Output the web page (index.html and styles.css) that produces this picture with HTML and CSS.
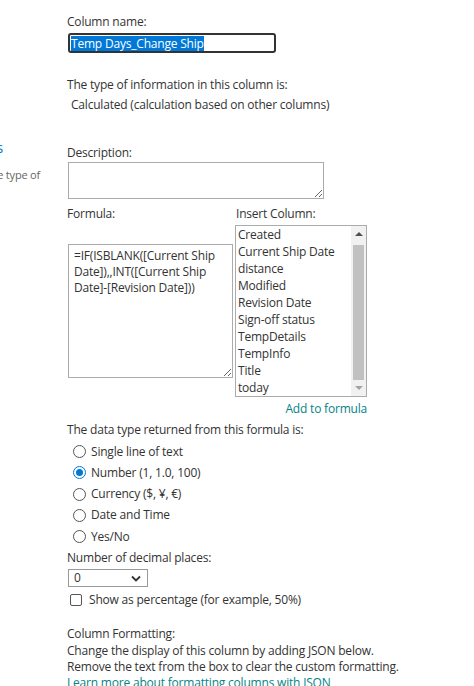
FILE: index.html
```html
<!DOCTYPE html>
<html lang="en">
<head>
  <meta charset="UTF-8">
  <meta name="viewport" content="width=device-width, initial-scale=1.0">
  <title>Edit Column</title>
  <link rel="stylesheet" href="styles.css">
</head>
<body>
  <div class="page">

    <!-- left nav, cut off by the window -->
    <aside class="side">
      <div class="side-title"><span>Name and Type Columns</span></div>
      <div class="side-text"><span>Type a name for this column, and select the type of</span></div>
    </aside>

    <main class="form">
      <div class="label">Column name:</div>
      <div class="name-box"><span class="sel">Temp Days_Change Ship</span></div>

      <div class="info">The type of information in this column is:</div>
      <div class="calc">Calculated (calculation based on other columns)</div>

      <div class="label desc-label">Description:</div>
      <textarea class="desc"></textarea>

      <!-- formula + column picker -->
      <div class="formula-row">
        <div class="formula-col">
          <div class="label">Formula:</div>
          <textarea class="formula">=IF(ISBLANK([Current Ship Date]),,INT([Current Ship Date]-[Revision Date]))</textarea>
        </div>
        <div class="insert-col">
          <div class="label insert-label">Insert Column:</div>
          <div class="listbox">
            <div class="items">
              <div>Created</div>
              <div>Current Ship Date</div>
              <div>distance</div>
              <div>Modified</div>
              <div>Revision Date</div>
              <div>Sign-off status</div>
              <div>TempDetails</div>
              <div>TempInfo</div>
              <div>Title</div>
              <div>today</div>
            </div>
            <div class="scrollbar">
              <div class="arrow up"></div>
              <div class="track"><div class="thumb"></div></div>
              <div class="arrow down"></div>
            </div>
          </div>
          <a class="link add" href="#">Add to formula</a>
        </div>
      </div>

      <div class="label returns">The data type returned from this formula is:</div>
      <div class="radios">
        <div class="radio"><span class="dot"></span>Single line of text</div>
        <div class="radio"><span class="dot on"></span>Number (1, 1.0, 100)</div>
        <div class="radio"><span class="dot"></span>Currency ($, ¥, €)</div>
        <div class="radio"><span class="dot"></span>Date and Time</div>
        <div class="radio"><span class="dot"></span>Yes/No</div>
      </div>

      <div class="label decimals">Number of decimal places:</div>
      <div class="select">
        <span>0</span>
        <svg width="10" height="7" viewBox="0 0 10 7"><path d="M1 1.5l4 4 4-4" fill="none" stroke="#333" stroke-width="1.8"/></svg>
      </div>
      <div class="check"><span class="box"></span>Show as percentage (for example, 50%)</div>

      <div class="label formatting">Column Formatting:</div>
      <div class="note first">Change the display of this column by adding JSON below.</div>
      <div class="note">Remove the text from the box to clear the custom formatting.</div>
      <a class="link note" href="#">Learn more about formatting columns with JSON</a>
    </main>

  </div>
</body>
</html>
```

FILE: styles.css
```css
body { margin: 0; background: #fff; color: #333; font-family: "Open Sans", "Segoe UI", sans-serif; font-size: 12px; line-height: 16px; letter-spacing: -0.2px; overflow: hidden; }
.page { display: flex; gap: 7px; }

.side { width: 60px; flex: none; overflow: hidden; }
.side-title, .side-text { display: flex; justify-content: flex-end; white-space: nowrap; }
.side-title { margin-top: 139px; padding-right: 57px; color: #0078d4; font-size: 14px; line-height: 18px; }
.side-text { margin-top: 11px; padding-right: 20px; color: #666; font-size: 11px; line-height: 14px; }

.form { width: 400px; padding-top: 14px; }
.label { line-height: 16px; }
.note { display: block; white-space: nowrap; }
.note.first { margin-top: 1px; }
.name-box { margin: 3px 0 0 1px; width: 208px; height: 20px; box-sizing: border-box; border: 2px solid #333; border-radius: 3px; padding: 1px; }
.sel { display: inline-block; background: #0078d7; color: #fff; line-height: 15px; height: 15px; }
.info { margin-top: 24px; }
.calc { margin-top: 4px; padding-left: 4px; }
.desc-label { margin-top: 32px; }

textarea { display: block; font: inherit; color: inherit; letter-spacing: inherit; border: 1px solid #ababab; box-sizing: border-box; margin: 0; }
.desc { margin: 1px 0 0 1px; width: 256px; height: 37px; }

.formula-row { display: flex; gap: 1px; margin-top: 7px; }
.formula-col { width: 167px; }
.formula { margin: 22px 0 0 1px; width: 165px; height: 134px; padding: 3px 5px; line-height: 16px; }
.insert-col { width: 132px; display: flex; flex-direction: column; }
.insert-label { padding-left: 1px; }
.listbox { margin-top: 3px; height: 172px; box-sizing: border-box; border: 1px solid #ababab; display: flex; }
.items { flex: 1; padding: 0 0 0 2px; line-height: 17px; }
.scrollbar { width: 15px; display: flex; flex-direction: column; background: #f1f1f1; }
.arrow { height: 17px; display: flex; align-items: center; justify-content: center; }
.arrow::after { content: ""; border-left: 4px solid transparent; border-right: 4px solid transparent; }
.up::after { border-bottom: 4px solid #505050; }
.down::after { border-top: 4px solid #a3a3a3; }
.track { flex: 1; padding: 2px 2px 0; }
.thumb { height: 135px; background: #c1c1c1; }

.link { color: #038387; text-decoration: none; }
.add { margin-top: 4px; align-self: flex-end; }

.returns { margin-top: 5px; }
.radios { margin-top: 3px; }
.radio { height: 21.25px; display: flex; align-items: center; gap: 5px; padding-left: 6px; }
.dot { width: 13px; height: 13px; box-sizing: border-box; border: 1px solid #555; border-radius: 50%; display: flex; align-items: center; justify-content: center; }
.dot.on { border-color: #0078d4; }
.dot.on::after { content: ""; width: 7px; height: 7px; border-radius: 50%; background: #0078d4; }

.decimals { margin-top: 3px; }
.select { margin: 3px 0 0 1px; width: 80px; height: 18px; box-sizing: border-box; border: 1px solid #999; display: flex; align-items: center; justify-content: space-between; padding: 0 6px 0 5px; }
.check { margin-top: 5px; height: 16px; display: flex; align-items: center; gap: 7px; padding-left: 3px; }
.box { width: 12px; height: 12px; box-sizing: border-box; border: 1px solid #555; border-radius: 2px; }
.formatting { margin-top: 18px; }
```
